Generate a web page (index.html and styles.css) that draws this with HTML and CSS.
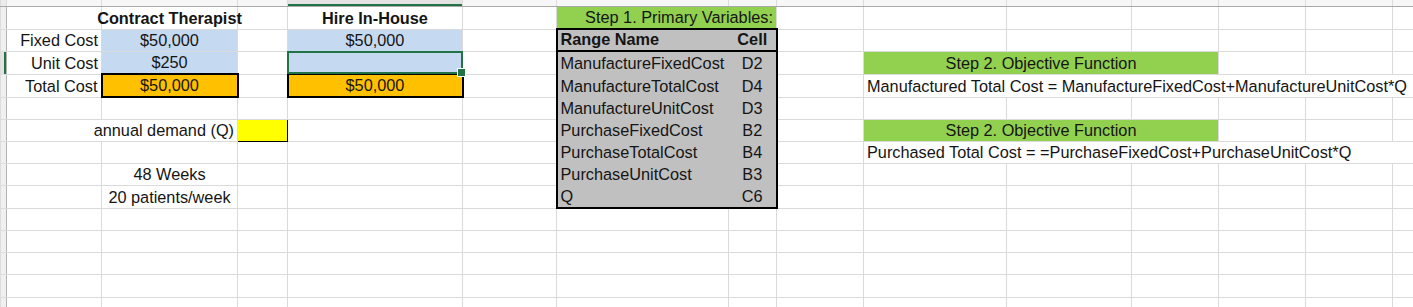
FILE: index.html
```html
<!DOCTYPE html>
<html lang="en">
<head>
<meta charset="utf-8">
<title>Contract vs. In-House Cost Model</title>
<link rel="stylesheet" href="styles.css">
</head>
<body>
<table class="sheet">
  <colgroup>
    <col class="w-rh"><col class="w-a"><col class="w-b"><col class="w-c"><col class="w-d"><col class="w-e"><col class="w-f"><col class="w-g"><col class="w-h"><col class="w-i"><col class="w-j"><col class="w-k"><col class="w-l"><col class="w-m"><col class="w-n">
  </colgroup>
  <thead>
    <tr class="col-heads">
      <th class="corner"></th>
      <th></th><th></th><th></th>
      <th class="active"></th>
      <th></th><th></th><th></th><th></th><th></th><th></th><th></th><th></th><th></th><th></th>
    </tr>
  </thead>
  <tbody>
    <tr class="tall">
      <th class="rh"></th>
      <td></td>
      <td class="bold"><div class="fit">Contract Therapist</div></td>
      <td></td>
      <td class="bold"><div class="fit">Hire In-House</div></td>
      <td></td>
      <td class="step right" colspan="2">Step 1. Primary Variables:</td>
      <td></td><td></td><td></td><td></td><td></td><td></td><td></td>
    </tr>
    <tr>
      <th class="rh"></th>
      <td class="right">Fixed Cost</td>
      <td class="input center">$50,000</td>
      <td></td>
      <td class="input center">$50,000</td>
      <td></td>
      <td class="names name-col head">Range Name</td>
      <td class="names cell-col head center">Cell</td>
      <td></td><td></td><td></td><td></td><td></td><td></td><td></td>
    </tr>
    <tr class="tall">
      <th class="rh rh-active"></th>
      <td class="right">Unit Cost</td>
      <td class="input center">$250</td>
      <td></td>
      <td class="input sel"></td>
      <td></td>
      <td class="names name-col">ManufactureFixedCost</td>
      <td class="names cell-col center">D2</td>
      <td></td>
      <td class="step center" colspan="3">Step 2. Objective Function</td>
      <td></td><td></td><td></td>
    </tr>
    <tr class="tall">
      <th class="rh"></th>
      <td class="right">Total Cost</td>
      <td class="total center">$50,000</td>
      <td></td>
      <td class="total center">$50,000</td>
      <td></td>
      <td class="names name-col">ManufactureTotalCost</td>
      <td class="names cell-col center">D4</td>
      <td></td>
      <td colspan="6">Manufactured Total Cost = ManufactureFixedCost+ManufactureUnitCost*Q</td>
    </tr>
    <tr>
      <th class="rh"></th>
      <td></td><td></td><td></td><td></td><td></td>
      <td class="names name-col">ManufactureUnitCost</td>
      <td class="names cell-col center">D3</td>
      <td></td><td></td><td></td><td></td><td></td><td></td><td></td>
    </tr>
    <tr>
      <th class="rh"></th>
      <td class="right" colspan="2">annual demand (Q)</td>
      <td class="demand"></td>
      <td></td><td></td>
      <td class="names name-col">PurchaseFixedCost</td>
      <td class="names cell-col center">B2</td>
      <td></td>
      <td class="step center" colspan="3">Step 2. Objective Function</td>
      <td></td><td></td><td></td>
    </tr>
    <tr>
      <th class="rh"></th>
      <td></td><td></td><td></td><td></td><td></td>
      <td class="names name-col">PurchaseTotalCost</td>
      <td class="names cell-col center">B4</td>
      <td></td>
      <td colspan="6">Purchased Total Cost = =PurchaseFixedCost+PurchaseUnitCost*Q</td>
    </tr>
    <tr>
      <th class="rh"></th>
      <td></td>
      <td class="center">48 Weeks</td>
      <td></td><td></td><td></td>
      <td class="names name-col">PurchaseUnitCost</td>
      <td class="names cell-col center">B3</td>
      <td></td><td></td><td></td><td></td><td></td><td></td><td></td>
    </tr>
    <tr class="tall">
      <th class="rh"></th>
      <td></td>
      <td class="center">20 patients/week</td>
      <td></td><td></td><td></td>
      <td class="names name-col last">Q</td>
      <td class="names cell-col center last">C6</td>
      <td></td><td></td><td></td><td></td><td></td><td></td><td></td>
    </tr>
    <tr>
      <th class="rh"></th>
      <td></td><td></td><td></td><td></td><td></td><td></td><td></td><td></td><td></td><td></td><td></td><td></td><td></td><td></td>
    </tr>
    <tr>
      <th class="rh"></th>
      <td></td><td></td><td></td><td></td><td></td><td></td><td></td><td></td><td></td><td></td><td></td><td></td><td></td><td></td>
    </tr>
    <tr>
      <th class="rh"></th>
      <td></td><td></td><td></td><td></td><td></td><td></td><td></td><td></td><td></td><td></td><td></td><td></td><td></td><td></td>
    </tr>
    <tr class="tall">
      <th class="rh"></th>
      <td></td><td></td><td></td><td></td><td></td><td></td><td></td><td></td><td></td><td></td><td></td><td></td><td></td><td></td>
    </tr>
    <tr>
      <th class="rh"></th>
      <td></td><td></td><td></td><td></td><td></td><td></td><td></td><td></td><td></td><td></td><td></td><td></td><td></td><td></td>
    </tr>
  </tbody>
</table>
</body>
</html>
```

FILE: styles.css
```css
* {
  box-sizing: border-box;
}

html,
body {
  margin: 0;
  padding: 0;
  background: #ffffff;
  overflow: hidden;
}

body {
  font-family: "Liberation Sans", Arial, sans-serif;
  font-size: 16.3px;
  color: #151515;
}

/* worksheet grid */
.sheet {
  border-collapse: collapse;
  table-layout: fixed;
  width: 1479px;
}

.w-rh { width: 6px; }
.w-a { width: 95px; }
.w-b { width: 136px; }
.w-c { width: 50px; }
.w-d { width: 175px; }
.w-e { width: 94px; }
.w-f { width: 172px; }
.w-g { width: 48px; }
.w-h { width: 87px; }
.w-i { width: 143px; }
.w-j { width: 125px; }
.w-k { width: 87px; }
.w-l { width: 87px; }
.w-m { width: 87px; }
.w-n { width: 87px; }

.sheet td {
  border: 1px solid #dadada;
  padding: 0 3px 2px;
  height: 22px;
  line-height: 18px;
  white-space: nowrap;
  vertical-align: bottom;
}

.sheet tr.tall td,
.sheet tr.tall th {
  height: 23px;
}

/* column header strip along the top edge */
.col-heads th {
  height: 6px;
  padding: 0;
  background: #f7f7f7;
  border: 1px solid #dcdcdc;
  border-top: 0;
  border-bottom: 1px solid #a9a9a9;
}

.col-heads th.corner {
  background: #ececec;
}

.col-heads th.active {
  background: #e3e3e3;
  box-shadow: inset 0 -2px 0 #217346;
}

/* row number strip on the left edge */
.rh {
  padding: 0;
  background: #f0f0f0;
  border: 1px solid #dcdcdc;
  border-right: 1px solid #b4b4b4;
}

.rh-active {
  background: #e3e3e3;
  box-shadow: inset -2px 0 0 #217346;
}

/* text alignment */
.right { text-align: right; }
.center { text-align: center; }
.bold { font-weight: bold; }

.fit {
  display: flex;
  justify-content: center;
}

/* cell formats */
.input {
  background: #c5d9f1;
}

.total {
  background: #ffc000;
  border: 2px solid #000000 !important;
}

.demand {
  background: #ffff00;
  border: 1px solid #000000 !important;
}

.step {
  background: #92d050;
}

/* named range listing */
.names {
  background: #c0c0c0;
  border-color: #c0c0c0 !important;
}

.name-col {
  border-left: 2px solid #000000 !important;
}

.cell-col {
  border-right: 2px solid #000000 !important;
}

.names.head {
  font-weight: bold;
  border-top: 2px solid #000000 !important;
  border-bottom: 2px solid #000000 !important;
}

.names.last {
  border-bottom: 2px solid #000000 !important;
}

/* active cell frame with fill handle */
.sel {
  position: relative;
}

.sel::after {
  content: "";
  position: absolute;
  left: -1px;
  top: -1px;
  right: -1px;
  bottom: -1px;
  border: 2px solid #217346;
  z-index: 2;
}

.sel::before {
  content: "";
  position: absolute;
  right: -4px;
  bottom: -4px;
  width: 7px;
  height: 7px;
  background: #217346;
  border: 1px solid #ffffff;
  z-index: 3;
}
```
